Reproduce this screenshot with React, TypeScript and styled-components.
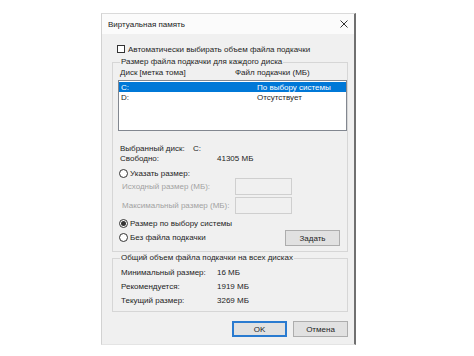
import styled, { createGlobalStyle } from 'styled-components';

const GlobalStyle = createGlobalStyle`
  html, body {
    margin: 0;
    padding: 0;
    background: #ffffff;
  }
  body {
    font-family: "Liberation Sans", Arial, sans-serif;
    font-size: 8px;
    color: #1e1e1e;
  }
`;

const Page = styled.div`
  width: 474px;
  height: 356px;
  padding: 13px 0 0 101px;
  box-sizing: border-box;
`;

const Frame = styled.div`
  width: 255px;
  display: flex;
  flex-direction: column;
  background: #f0f0f0;
  border-left: 1px solid #d2d2d2;
  border-right: 2px solid #707070;
  border-top: 1px solid #dadada;
  border-bottom: 1px solid #e4e4e4;
  box-sizing: border-box;
`;

const TitleBar = styled.div`
  height: 20px;
  display: flex;
  align-items: center;
  justify-content: space-between;
  padding: 0 6px 0 6px;
  background: #fbfbfb;
  font-size: 8px;
  color: #222;
`;

const Body = styled.div`
  display: flex;
  flex-direction: column;
  padding: 10px 6px 7px 10px;
`;

const CheckRow = styled.label`
  height: 10px;
  display: flex;
  align-items: center;
  gap: 3px;
  padding-left: 5px;
`;

const CheckBox = styled.span`
  width: 8px;
  height: 8px;
  border: 1px solid #333;
  background: #fff;
  box-sizing: border-box;
`;

const Group = styled.fieldset<{ $top: number; $bottom: number }>`
  margin: ${(p) => p.$top}px 0 0 0;
  padding: 0 1px ${(p) => p.$bottom}px 5px;
  border: 1px solid #d6d6d6;
  min-width: 0;
  display: flex;
  flex-direction: column;
`;

const Legend = styled.legend`
  padding: 0 1px;
  margin-left: 2px;
  line-height: 10px;
  height: 10px;
`;

const HeaderRow = styled.div`
  height: 10px;
  display: grid;
  grid-template-columns: 115px 1fr;
  align-items: center;
  padding-left: 2px;
`;

const ListBox = styled.div`
  margin-top: 3px;
  width: 229px;
  height: 51px;
  box-sizing: border-box;
  border: 1px solid #828790;
  background: #fff;
  padding-top: 1px;
`;

const ListRow = styled.div<{ $selected?: boolean }>`
  height: 10px;
  display: grid;
  grid-template-columns: 136px 1fr;
  align-items: center;
  padding-left: 2px;
  background: ${(p) => (p.$selected ? '#0078d7' : 'transparent')};
  color: ${(p) => (p.$selected ? '#ffffff' : '#1e1e1e')};
`;

const InfoRow = styled.div<{ $label: number; $top?: number }>`
  height: 10px;
  display: grid;
  grid-template-columns: ${(p) => p.$label}px 1fr;
  align-items: center;
  padding-left: 2px;
  margin-top: ${(p) => p.$top ?? 0}px;
`;

const RadioRow = styled.div<{ $top?: number }>`
  height: 10px;
  display: flex;
  align-items: center;
  gap: 2px;
  padding-left: 1px;
  margin-top: ${(p) => p.$top ?? 0}px;
`;

const Radio = styled.span<{ $checked?: boolean }>`
  width: 9px;
  height: 9px;
  border-radius: 50%;
  border: 1px solid #333;
  background: #fff;
  box-sizing: border-box;
  display: flex;
  align-items: center;
  justify-content: center;

  &::after {
    content: '';
    width: 5px;
    height: 5px;
    border-radius: 50%;
    background: ${(p) => (p.$checked ? '#333' : 'transparent')};
  }
`;

const SizeRow = styled.div<{ $top?: number }>`
  height: 17px;
  display: grid;
  grid-template-columns: 113px 57px;
  align-items: center;
  padding-left: 4px;
  margin-top: ${(p) => p.$top ?? 0}px;
  color: #a2a2a2;
`;

const SizeInput = styled.div`
  height: 17px;
  box-sizing: border-box;
  border: 1px solid #cfcfcf;
  background: #f0f0f0;
`;

const ChoiceRow = styled.div`
  display: flex;
  justify-content: space-between;
  margin-top: 4px;
  padding-right: 6px;
`;

const ChoiceColumn = styled.div`
  display: flex;
  flex-direction: column;
`;

const Button = styled.div<{ $default?: boolean; $top?: number }>`
  width: 55px;
  height: 16px;
  box-sizing: border-box;
  margin-top: ${(p) => p.$top ?? 0}px;
  display: flex;
  align-items: center;
  justify-content: center;
  background: #e1e1e1;
  border: ${(p) => (p.$default ? '2px solid #2a7bd0' : '1px solid #adadad')};
  color: #1e1e1e;
`;

const TotalRow = styled.div`
  height: 14px;
  display: grid;
  grid-template-columns: 96px 1fr;
  align-items: center;
  padding-left: 3px;
`;

const Footer = styled.div`
  display: flex;
  justify-content: flex-end;
  gap: 6px;
  margin-top: 9px;
`;

const CloseIcon = () => (
  <svg width="8" height="8" viewBox="0 0 8 8">
    <path d="M0.5 0.5L7.5 7.5M7.5 0.5L0.5 7.5" stroke="#333" strokeWidth="1" />
  </svg>
);

const App = () => (
  <Page>
    <GlobalStyle />
    <Frame>
      <TitleBar>
        <span>Виртуальная память</span>
        <CloseIcon />
      </TitleBar>
      <Body>
        <CheckRow>
          <CheckBox />
          <span>Автоматически выбирать объем файла подкачки</span>
        </CheckRow>

        <Group $top={3} $bottom={5}>
          <Legend>Размер файла подкачки для каждого диска</Legend>
          <HeaderRow>
            <span>Диск [метка тома]</span>
            <span>Файл подкачки (МБ)</span>
          </HeaderRow>
          <ListBox>
            <ListRow $selected>
              <span>C:</span>
              <span>По выбору системы</span>
            </ListRow>
            <ListRow>
              <span>D:</span>
              <span>Отсутствует</span>
            </ListRow>
          </ListBox>

          <InfoRow $label={73} $top={12}>
            <span>Выбранный диск:</span>
            <span>C:</span>
          </InfoRow>
          <InfoRow $label={97}>
            <span>Свободно:</span>
            <span>41305 МБ</span>
          </InfoRow>

          <RadioRow $top={5}>
            <Radio />
            <span>Указать размер:</span>
          </RadioRow>
          <SizeRow>
            <span>Исходный размер (МБ):</span>
            <SizeInput />
          </SizeRow>
          <SizeRow $top={2}>
            <span>Максимальный размер (МБ):</span>
            <SizeInput />
          </SizeRow>

          <ChoiceRow>
            <ChoiceColumn>
              <RadioRow>
                <Radio $checked />
                <span>Размер по выбору системы</span>
              </RadioRow>
              <RadioRow $top={4}>
                <Radio />
                <span>Без файла подкачки</span>
              </RadioRow>
            </ChoiceColumn>
            <Button $top={12}>Задать</Button>
          </ChoiceRow>
        </Group>

        <Group $top={1} $bottom={4}>
          <Legend>Общий объем файла подкачки на всех дисках</Legend>
          <TotalRow style={{ marginTop: 2 }}>
            <span>Минимальный размер:</span>
            <span>16 МБ</span>
          </TotalRow>
          <TotalRow>
            <span>Рекомендуется:</span>
            <span>1919 МБ</span>
          </TotalRow>
          <TotalRow>
            <span>Текущий размер:</span>
            <span>3269 МБ</span>
          </TotalRow>
        </Group>

        <Footer>
          <Button $default>OK</Button>
          <Button>Отмена</Button>
        </Footer>
      </Body>
    </Frame>
  </Page>
);

export default App;
